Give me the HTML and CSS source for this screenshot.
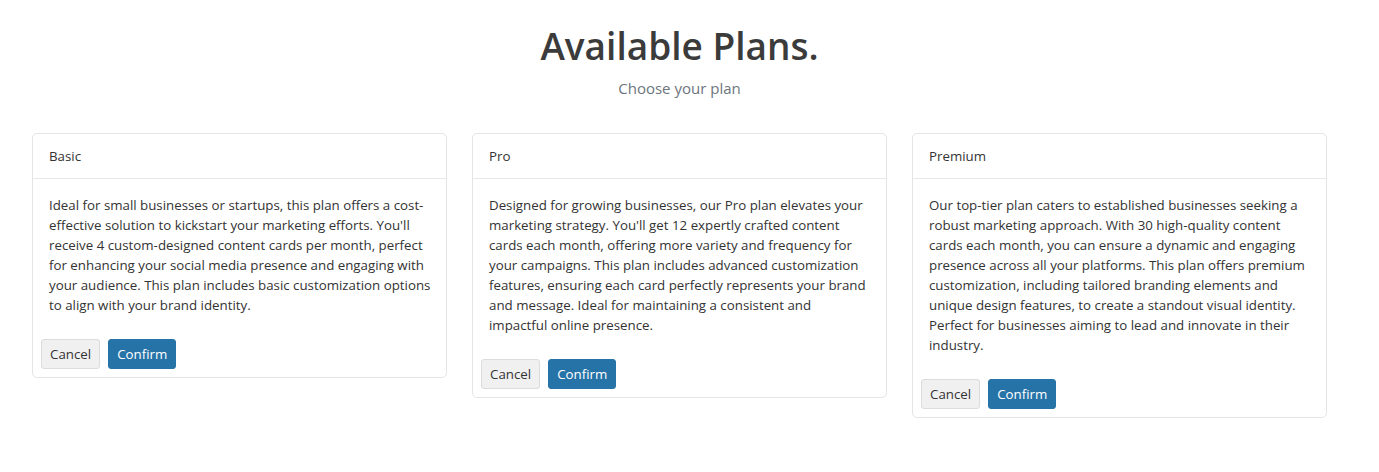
FILE: index.html
```html
<!DOCTYPE html>
<html lang="en">
<head>
<meta charset="utf-8">
<title>Available Plans</title>
<link rel="stylesheet" href="styles.css">
</head>
<body>
<main class="page">
  <header class="intro">
    <h1 class="title">Available Plans.</h1>
    <p class="subtitle">Choose your plan</p>
  </header>
  <section class="plans">
    <article class="card">
      <div class="card-header">Basic</div>
      <div class="card-body card-body-wide">Ideal for small businesses or startups, this plan offers a cost-effective solution to kickstart your marketing efforts. You'll receive 4 custom-designed content cards per month, perfect<br>for enhancing your social media presence and engaging with your audience. This plan includes basic customization options to align with your brand identity.</div>
      <div class="card-actions">
        <button class="btn btn-cancel" type="button">Cancel</button>
        <button class="btn btn-confirm" type="button">Confirm</button>
      </div>
    </article>
    <article class="card">
      <div class="card-header">Pro</div>
      <div class="card-body">Designed for growing businesses, our Pro plan elevates your marketing strategy. You'll get 12 expertly crafted content cards each month, offering more variety and frequency for your campaigns. This plan includes advanced customization features, ensuring each card perfectly represents your brand and message. Ideal for maintaining a consistent and impactful online presence.</div>
      <div class="card-actions">
        <button class="btn btn-cancel" type="button">Cancel</button>
        <button class="btn btn-confirm" type="button">Confirm</button>
      </div>
    </article>
    <article class="card">
      <div class="card-header">Premium</div>
      <div class="card-body">Our top-tier plan caters to established businesses seeking a robust marketing approach. With 30 high-quality content cards each month, you can ensure a dynamic and engaging presence across all your platforms. This plan offers premium customization, including tailored branding elements and unique design features, to create a standout visual identity. Perfect for businesses aiming to lead and innovate in their industry.</div>
      <div class="card-actions">
        <button class="btn btn-cancel" type="button">Cancel</button>
        <button class="btn btn-confirm" type="button">Confirm</button>
      </div>
    </article>
  </section>
</main>
</body>
</html>
```

FILE: styles.css
```css
* { box-sizing: border-box; }

html, body {
  margin: 0;
  background: #ffffff;
}

body {
  font-family: "Open Sans", "Noto Sans", "Liberation Sans", sans-serif;
  color: #333333;
}

.page {
  width: 1295px;
  margin-left: 32px;
  padding-top: 20px;
}

.intro {
  text-align: center;
}

.title {
  margin: 0;
  font-size: 37px;
  line-height: 52px;
  font-weight: 600;
  color: #3b3b3b;
  letter-spacing: 0;
}

.subtitle {
  margin: 5px 0 0;
  font-size: 15px;
  line-height: 22px;
  color: #6c757d;
}

.plans {
  display: flex;
  align-items: flex-start;
  gap: 25px;
  margin-top: 34px;
}

.card {
  flex: 1 1 0;
  border: 1px solid #e5e5e5;
  border-radius: 5px;
  background: #fff;
}

.card-header {
  padding: 12px 16px;
  font-size: 13.3px;
  line-height: 20px;
  border-bottom: 1px solid #e8e8e8;
}

.card-body {
  padding: 16px;
  font-size: 13.3px;
  line-height: 20px;
}

.card-body-wide {
  padding-right: 12px;
}

.card-actions {
  display: flex;
  gap: 8px;
  padding: 8px;
}

.btn {
  font-family: inherit;
  font-size: 13.3px;
  line-height: 20px;
  padding: 4px 8px;
  border-radius: 3px;
  border: 1px solid transparent;
  cursor: pointer;
}

.btn-cancel {
  background: #f0f0f0;
  border-color: #dcdcdc;
  color: #333;
}

.btn-confirm {
  background: #2673a8;
  border-color: #2673a8;
  color: #fff;
}
```
